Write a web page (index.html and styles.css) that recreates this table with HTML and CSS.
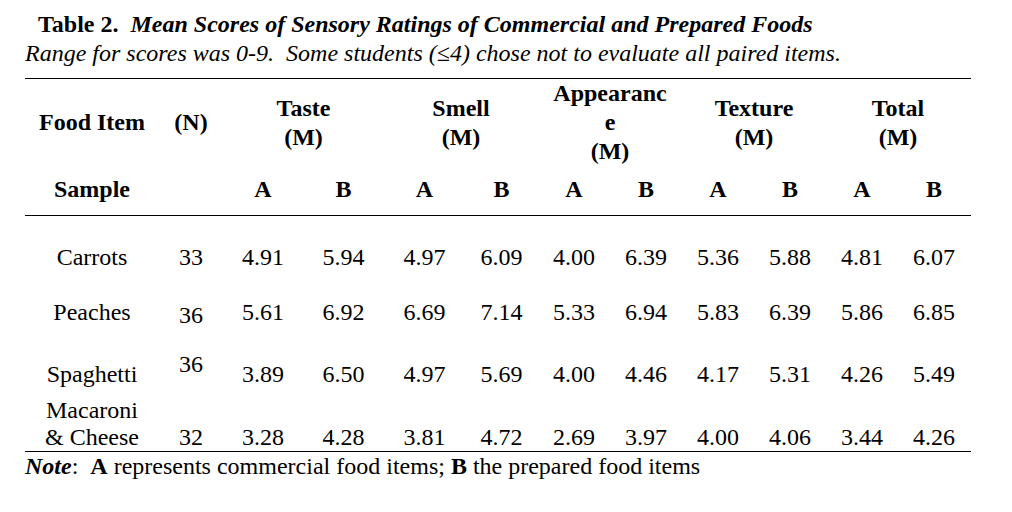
FILE: index.html
```html
<!DOCTYPE html>
<html lang="en">
<head>
<meta charset="utf-8">
<title>Table 2</title>
<link rel="stylesheet" href="styles.css">
</head>
<body>
<div class="page">
  <p class="title"><b class="title-num">Table 2.</b>&nbsp; <b class="title-text">Mean Scores of Sensory Ratings of Commercial and Prepared Foods</b></p>
  <p class="subtitle">Range for scores was 0-9.&nbsp; Some students (≤4) chose not to evaluate all paired items.</p>

  <div class="table">
    <div class="grid head-top">
      <div class="cell">Food Item</div>
      <div class="cell">(N)</div>
      <div class="cell span2">Taste<br>(M)</div>
      <div class="cell span2">Smell<br>(M)</div>
      <div class="cell span2">Appearanc<br>e<br>(M)</div>
      <div class="cell span2">Texture<br>(M)</div>
      <div class="cell span2">Total<br>(M)</div>
    </div>
    <div class="grid head-sub">
      <div class="cell">Sample</div>
      <div class="cell"></div>
      <div class="cell">A</div><div class="cell">B</div>
      <div class="cell">A</div><div class="cell">B</div>
      <div class="cell">A</div><div class="cell">B</div>
      <div class="cell">A</div><div class="cell">B</div>
      <div class="cell">A</div><div class="cell">B</div>
    </div>

    <div class="grid row row-carrots">
      <div class="cell">Carrots</div>
      <div class="cell">33</div>
      <div class="cell">4.91</div><div class="cell">5.94</div>
      <div class="cell">4.97</div><div class="cell">6.09</div>
      <div class="cell">4.00</div><div class="cell">6.39</div>
      <div class="cell">5.36</div><div class="cell">5.88</div>
      <div class="cell">4.81</div><div class="cell">6.07</div>
    </div>
    <div class="grid row row-peaches">
      <div class="cell">Peaches</div>
      <div class="cell n-low">36</div>
      <div class="cell">5.61</div><div class="cell">6.92</div>
      <div class="cell">6.69</div><div class="cell">7.14</div>
      <div class="cell">5.33</div><div class="cell">6.94</div>
      <div class="cell">5.83</div><div class="cell">6.39</div>
      <div class="cell">5.86</div><div class="cell">6.85</div>
    </div>
    <div class="grid row row-spaghetti">
      <div class="cell">Spaghetti</div>
      <div class="cell n-high">36</div>
      <div class="cell">3.89</div><div class="cell">6.50</div>
      <div class="cell">4.97</div><div class="cell">5.69</div>
      <div class="cell">4.00</div><div class="cell">4.46</div>
      <div class="cell">4.17</div><div class="cell">5.31</div>
      <div class="cell">4.26</div><div class="cell">5.49</div>
    </div>
    <div class="grid row row-mac">
      <div class="cell">Macaroni<br>&amp; Cheese</div>
      <div class="cell">32</div>
      <div class="cell">3.28</div><div class="cell">4.28</div>
      <div class="cell">3.81</div><div class="cell">4.72</div>
      <div class="cell">2.69</div><div class="cell">3.97</div>
      <div class="cell">4.00</div><div class="cell">4.06</div>
      <div class="cell">3.44</div><div class="cell">4.26</div>
    </div>
  </div>

  <p class="note"><b class="note-label">Note</b>:&nbsp; <b class="note-key">A</b> represents commercial food items; <b class="note-key">B</b> the prepared food items</p>
</div>
</body>
</html>
```

FILE: styles.css
```css
.page { font-family: "Liberation Serif"; color: #000000; font-size: 24px; line-height: 29px; padding: 2px 0 0 17px; width: 946px; }
.title { font-family: "Liberation Serif"; margin: 0 0 0 13px; font-size: 24px; line-height: 29px; font-weight: bold; }
.title-num { font-family: "Liberation Serif"; font-weight: bold; }
.title-text { font-family: "Liberation Serif"; font-weight: bold; font-style: italic; }
.subtitle { font-family: "Liberation Serif"; margin: 0 0 10px 0; font-style: italic; font-size: 24px; line-height: 29px; }
.table { font-family: "Liberation Serif"; border-top: 1px solid #000000; border-bottom: 1px solid #000000; }
.grid { display: grid; grid-template-columns: 134px 64px 80px 81px 81px 73px 72px 72px 72px 72px 72px 72px; }
.cell { font-family: "Liberation Serif"; text-align: center; white-space: nowrap; }
.span2 { grid-column: span 2; }
.head-top { font-weight: bold; align-items: center; min-height: 87px; }
.head-sub { font-weight: bold; padding: 9px 0 11px; border-bottom: 1px solid #000000; }
.row { align-items: end; }
.row-carrots { margin-top: 27px; }
.row-peaches { margin-top: 26px; }
.row-spaghetti { margin-top: 33px; }
.row-mac { margin-top: 8px; line-height: 27px; }
.n-low { align-self: start; margin: 3px 0 -3px; }
.n-high { align-self: start; margin: -10px 0 10px; }
.note { font-family: "Liberation Serif"; margin: 0; font-size: 24px; line-height: 29px; }
.note-label { font-family: "Liberation Serif"; font-weight: bold; font-style: italic; }
.note-key { font-family: "Liberation Serif"; font-weight: bold; }
```
